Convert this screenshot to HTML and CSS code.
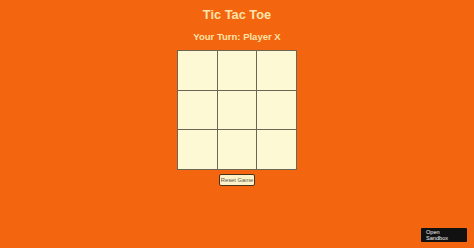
FILE: index.html
```html
<!DOCTYPE html>
<html lang="en">
<head>
<meta charset="utf-8">
<title>Tic Tac Toe</title>
<link rel="stylesheet" href="styles.css">
</head>
<body>
<main class="game">
  <h1 class="title">Tic Tac Toe</h1>
  <h2 class="status">Your Turn: Player X</h2>
  <div class="board">
    <div class="cell"></div><div class="cell"></div><div class="cell"></div>
    <div class="cell"></div><div class="cell"></div><div class="cell"></div>
    <div class="cell"></div><div class="cell"></div><div class="cell"></div>
  </div>
  <button class="reset" type="button">Reset Game</button>
</main>
<a class="sandbox" href="#">Open<br>Sandbox</a>
</body>
</html>
```

FILE: styles.css
```css
html, body {
  margin: 0;
  padding: 0;
}
body {
  width: 474px;
  height: 248px;
  background: #f3650f;
  font-family: "Liberation Sans", Arial, sans-serif;
  overflow: hidden;
  position: relative;
}
.game {
  display: flex;
  flex-direction: column;
  align-items: center;
  padding-top: 8px;
}
.title {
  margin: 0;
  font-size: 12.8px;
  line-height: 14px;
  font-weight: bold;
  color: #fce4aa;
}
.status {
  margin: 9px 0 0;
  font-size: 9.5px;
  line-height: 11px;
  font-weight: bold;
  color: #fce4aa;
}
.board {
  margin-top: 8px;
  width: 120px;
  height: 120px;
  box-sizing: border-box;
  display: grid;
  grid-template-columns: repeat(3, 1fr);
  grid-template-rows: repeat(3, 1fr);
  gap: 1px;
  padding: 1px;
  background: #6f6555;
}
.cell {
  background: #fcf9d4;
}
.reset {
  margin-top: 4px;
  width: 36px;
  height: 12px;
  padding: 0;
  box-sizing: border-box;
  border: 1px solid #4a3318;
  border-radius: 2px;
  background: #fcf3c9;
  color: #5e574c;
  font-family: "Liberation Sans", Arial, sans-serif;
  font-size: 5.8px;
  line-height: 10px;
}
.sandbox {
  position: absolute;
  left: 421px;
  top: 228px;
  width: 46px;
  height: 14px;
  box-sizing: border-box;
  padding: 1px 0 0 5px;
  background: #111111;
  color: #f2f2f2;
  font-size: 5.6px;
  line-height: 6px;
  text-decoration: none;
  border-radius: 1px;
}
```
